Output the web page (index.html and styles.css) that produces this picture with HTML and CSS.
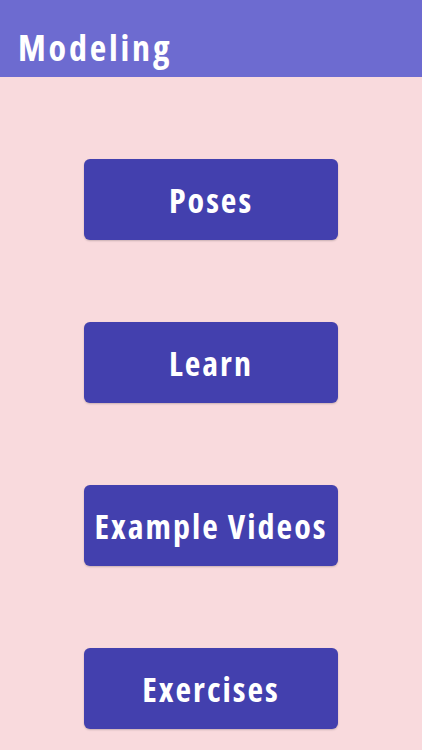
FILE: index.html
```html
<!DOCTYPE html>
<html>
<head>
<meta charset="utf-8">
<link rel="stylesheet" href="styles.css">
</head>
<body>
<header class="appbar"><h1 class="title">Modeling</h1></header>
<main class="menu">
  <button class="menu-btn">Poses</button>
  <button class="menu-btn">Learn</button>
  <button class="menu-btn">Example Videos</button>
  <button class="menu-btn">Exercises</button>
</main>
</body>
</html>
```
FILE: styles.css
```css
html, body {
  margin: 0;
  padding: 0;
  width: 422px;
  height: 750px;
  background: #f9dadd;
  overflow: hidden;
  font-family: "Open Sans", sans-serif;
}
.appbar {
  height: 77px;
  background: #6d6bd0;
  padding: 30px 18px 0;
  box-sizing: border-box;
}
.title {
  margin: 0;
  color: #fff;
  font-size: 36px;
  font-weight: 700;
  font-stretch: 87.5%;
  letter-spacing: 2.8px;
  line-height: 1;
}
.menu {
  display: flex;
  flex-direction: column;
  align-items: center;
  gap: 82px;
  padding-top: 82px;
}
.menu-btn {
  width: 254px;
  height: 81px;
  border: none;
  border-radius: 6px;
  background: #4340ae;
  color: #fff;
  font-family: "Open Sans", sans-serif;
  font-stretch: 87.5%;
  font-weight: 700;
  font-size: 34px;
  letter-spacing: 2px;
  white-space: nowrap;
  padding: 0;
  box-shadow: 0 1px 2px rgba(0,0,0,0.2);
}
```
